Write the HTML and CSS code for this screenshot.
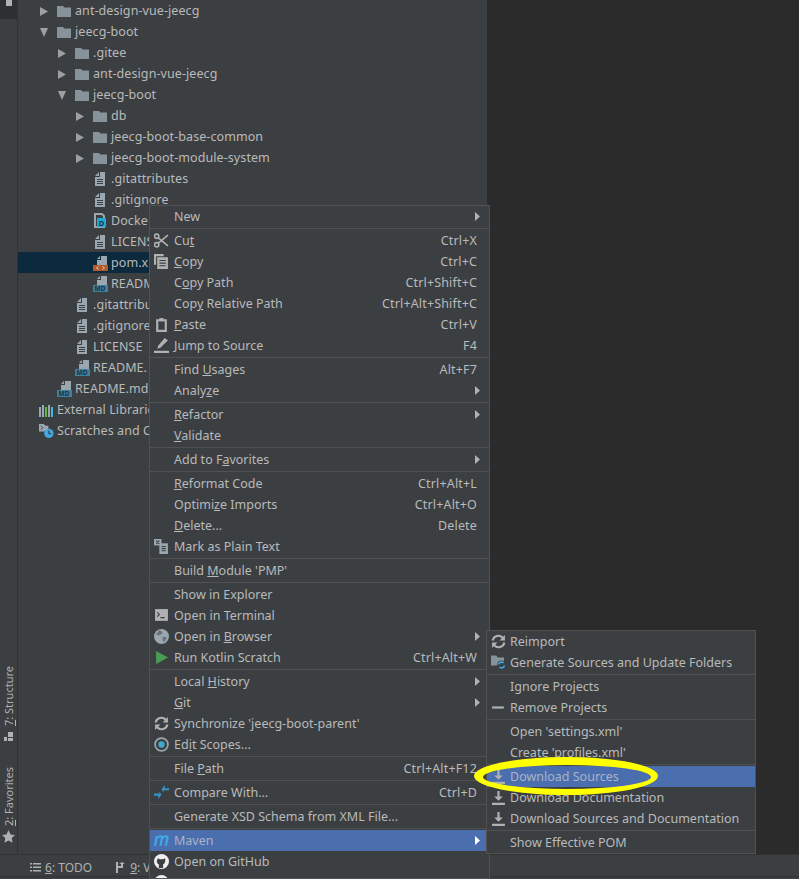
FILE: index.html
```html
<!DOCTYPE html>
<html lang="en">
<head>
<meta charset="utf-8">
<title>IDE</title>
<link rel="stylesheet" href="styles.css">
</head>
<body>
<svg width="0" height="0" class="defs">
<defs>
<symbol id="folder" viewBox="0 0 15 17"><path fill="#87939a" d="M0 4h6l1.500 1.500H14V15H0z"/></symbol>
<symbol id="file" viewBox="0 0 15 17"><path fill="#9aa7b0" d="M7 2h5v14H2V7h5z"/><path fill="#9aa7b0" d="M6 2v4H2z"/><path stroke="#3c3f41" d="M4 9.500h6M4 11.500h6M4 13.500h6"/></symbol>
<symbol id="md" viewBox="0 0 15 17"><path fill="#9aa7b0" d="M8 1h6v9H4V5h4z"/><path fill="#9aa7b0" d="M7 1v3H4z"/><rect y="10" width="15" height="7" fill="#40819e"/><text x="1.500" y="16.200" class="ic-mark">MD</text></symbol>
</defs>
</svg>
<div class="ide">
<div class="main">
<aside class="stripe">
<div class="stripe-top"><span class="stripe-knob"></span></div>
<div class="stripe-items">
<div class="stripe-item stripe-item-a"><span class="vlabel"><u>7</u>: Structure</span><svg width="10" height="10" viewBox="0 0 10 10"><path fill="#afb1b3" d="M4 0h5v5H4zM0 5h3v4H0zM4 6h5v3H4z"/></svg></div>
<div class="stripe-item"><span class="vlabel"><u>2</u>: Favorites</span><svg width="13" height="13" viewBox="0 0 13 13"><path fill="#afb1b3" d="M6.500 0l2 4.500 4.500.5-3.300 3 .9 4.800-4.100-2.400-4.100 2.400.9-4.800L0 5l4.500-.5z"/></svg></div>
</div>
</aside>
<section class="tree">
<div class="row l1"><i class="arr r"></i><svg class="ic"><use href="#folder"/></svg><span>ant-design-vue-jeecg</span></div>
<div class="row l1"><i class="arr d"></i><svg class="ic"><use href="#folder"/></svg><span>jeecg-boot</span></div>
<div class="row l2"><i class="arr r"></i><svg class="ic"><use href="#folder"/></svg><span>.gitee</span></div>
<div class="row l2"><i class="arr r"></i><svg class="ic"><use href="#folder"/></svg><span>ant-design-vue-jeecg</span></div>
<div class="row l2"><i class="arr d"></i><svg class="ic"><use href="#folder"/></svg><span>jeecg-boot</span></div>
<div class="row l3"><i class="arr r"></i><svg class="ic"><use href="#folder"/></svg><span>db</span></div>
<div class="row l3"><i class="arr r"></i><svg class="ic"><use href="#folder"/></svg><span>jeecg-boot-base-common</span></div>
<div class="row l3"><i class="arr r"></i><svg class="ic"><use href="#folder"/></svg><span>jeecg-boot-module-system</span></div>
<div class="row l3"><i class="arr"></i><svg class="ic"><use href="#file"/></svg><span>.gitattributes</span></div>
<div class="row l3"><i class="arr"></i><svg class="ic"><use href="#file"/></svg><span>.gitignore</span></div>
<div class="row l3"><i class="arr"></i><svg class="ic" viewBox="0 0 15 17"><path fill="none" stroke="#9aa7b0" stroke-width="2" d="M2 2h7l2 2v11H2z"/><rect x="4" y="6" width="9" height="9" fill="#1fa8dc"/><text x="5.800" y="13.500" class="d-mark">D</text></svg><span>Docke</span></div>
<div class="row l3"><i class="arr"></i><svg class="ic"><use href="#file"/></svg><span>LICENS</span></div>
<div class="row l3 sel"><i class="arr"></i><svg class="ic" viewBox="0 0 15 17"><path fill="#9aa7b0" d="M8 2h6v9H4V6h4z"/><path fill="#9aa7b0" d="M7 2v3H4z"/><rect y="11" width="15" height="6" fill="#b35a2b"/><path fill="none" stroke="#e0c8b8" d="M5.500 12.500L3.500 14l2 1.500M9.500 12.500l2 1.500-2 1.500"/></svg><span>pom.x</span></div>
<div class="row l3"><i class="arr"></i><svg class="ic"><use href="#md"/></svg><span>READM</span></div>
<div class="row l2"><i class="arr"></i><svg class="ic"><use href="#file"/></svg><span>.gitattribu</span></div>
<div class="row l2"><i class="arr"></i><svg class="ic"><use href="#file"/></svg><span>.gitignore</span></div>
<div class="row l2"><i class="arr"></i><svg class="ic"><use href="#file"/></svg><span>LICENSE</span></div>
<div class="row l2"><i class="arr"></i><svg class="ic"><use href="#md"/></svg><span>README.</span></div>
<div class="row l1"><i class="arr"></i><svg class="ic"><use href="#md"/></svg><span>README.md</span></div>
<div class="row l0"><i class="arr"></i><svg class="ic" viewBox="0 0 15 17"><path fill="#9aa7b0" d="M0 6h2v10H0zM3 4h2v12H3z"/><path fill="#62b543" d="M6 6h2v10H6z"/><path fill="#9aa7b0" d="M9 4h2v12H9z"/><path fill="#40b6e0" d="M12 6h2v10h-2z"/></svg><span>External Librarie</span></div>
<div class="row l0"><i class="arr"></i><svg class="ic" viewBox="0 0 16 18"><path fill="#9aa7b0" d="M0 2h5l2 2h3v6H0z"/><path fill="none" stroke="#3c3f41" d="M2 4l2 2-2 2"/><circle cx="10.500" cy="12" r="5" fill="#40a9e0"/><path fill="none" stroke="#2b2b2b" d="M10.500 9v3.500H13"/></svg><span>Scratches and C</span></div>
</section>
<div class="editor"></div>
</div>
<footer class="status">
<span class="tool"><svg width="11" height="9" viewBox="0 0 11 9"><path fill="#afb1b3" d="M0 0h2v1.500H0zM3 0h8v1.500H3zM0 3.500h2V5H0zM3 3.500h8V5H3zM0 7h2v1.500H0zM3 7h8v1.500H3z"/></svg><span><u>6</u>: TODO</span></span>
<span class="tool"><svg width="10" height="11" viewBox="0 0 10 11"><path fill="#afb1b3" d="M0 0h2v11H0zM2 4h3V2H3l3-2 3 2H7v4H2z"/></svg><span><u>9</u>: V</span></span>
</footer>
</div>

<nav class="menu main-menu">
<div class="mi"><span class="lb">New</span><i class="sub"></i></div>
<hr>
<div class="mi"><svg class="mic" viewBox="0 0 14 14"><g fill="none" stroke="#afb1b3" stroke-width="1.500"><circle cx="2.500" cy="3" r="2"/><circle cx="2.500" cy="11" r="2"/><path d="M4 4.500L13 12M4 9.500L13 2"/></g></svg><span class="lb">Cu<u>t</u></span><kbd>Ctrl+X</kbd></div>
<div class="mi"><svg class="mic" viewBox="0 0 14 14"><path fill="#afb1b3" d="M0 0h9v2H2v8H0z"/><path fill="#afb1b3" d="M3 3h10v11H3z"/><path stroke="#3c3f41" d="M5 6h6M5 8.500h6M5 11h6"/></svg><span class="lb"><u>C</u>opy</span><kbd>Ctrl+C</kbd></div>
<div class="mi"><span class="lb">C<u>o</u>py Path</span><kbd>Ctrl+Shift+C</kbd></div>
<div class="mi"><span class="lb">Cop<u>y</u> Relative Path</span><kbd>Ctrl+Alt+Shift+C</kbd></div>
<div class="mi"><svg class="mic" viewBox="0 0 14 14"><path fill="none" stroke="#afb1b3" stroke-width="2" d="M3 3h8v10H3z"/><rect x="5" y="1" width="4" height="3" fill="#afb1b3"/></svg><span class="lb"><u>P</u>aste</span><kbd>Ctrl+V</kbd></div>
<div class="mi"><svg class="mic" viewBox="0 0 14 14"><path fill="#afb1b3" d="M10 0l3 2-7 7-3 1 1-3zM0 12h14v2H0z"/></svg><span class="lb">Jump to Source</span><kbd>F4</kbd></div>
<hr>
<div class="mi"><span class="lb">Find <u>U</u>sages</span><kbd>Alt+F7</kbd></div>
<div class="mi"><span class="lb">Analy<u>z</u>e</span><i class="sub"></i></div>
<hr>
<div class="mi"><span class="lb"><u>R</u>efactor</span><i class="sub"></i></div>
<div class="mi"><span class="lb"><u>V</u>alidate</span></div>
<hr>
<div class="mi"><span class="lb">Add to F<u>a</u>vorites</span><i class="sub"></i></div>
<hr>
<div class="mi"><span class="lb"><u>R</u>eformat Code</span><kbd>Ctrl+Alt+L</kbd></div>
<div class="mi"><span class="lb">Optimi<u>z</u>e Imports</span><kbd>Ctrl+Alt+O</kbd></div>
<div class="mi"><span class="lb"><u>D</u>elete...</span><kbd>Delete</kbd></div>
<div class="mi"><svg class="mic" viewBox="0 0 14 14"><path fill="#9aa7b0" d="M0 0h7v6H0z"/><path fill="#9aa7b0" d="M5 4h8v10H5z"/><path stroke="#3c3f41" d="M2 1.500l3 3M5 1.500l-3 3M7 7h4M7 9h4M7 11h4"/></svg><span class="lb">Mark as Plain Text</span></div>
<hr>
<div class="mi"><span class="lb">Build <u>M</u>odule 'PMP'</span></div>
<hr>
<div class="mi"><span class="lb">Show in Explorer</span></div>
<div class="mi"><svg class="mic" viewBox="0 0 14 14"><rect x="1" y="1" width="12" height="11" fill="#afb1b3"/><path fill="none" stroke="#3c3f41" d="M3 4l2 2-2 2M6 9h4"/></svg><span class="lb">Open in Terminal</span></div>
<div class="mi"><svg class="mic" viewBox="0 0 14 14"><circle cx="7" cy="7" r="7" fill="#9aa7b0"/><path fill="#6b7378" d="M5 1l3 2-1 2-3 1-2-1zM8 7l4 1-2 4-2-1z"/></svg><span class="lb">Open in <u>B</u>rowser</span><i class="sub"></i></div>
<div class="mi"><svg class="mic" viewBox="0 0 14 14"><path fill="#499c54" d="M2 1l11 6-11 6z"/></svg><span class="lb">Run Kotlin Scratch</span><kbd>Ctrl+Alt+W</kbd></div>
<hr>
<div class="mi"><span class="lb">Local <u>H</u>istory</span><i class="sub"></i></div>
<div class="mi"><span class="lb"><u>G</u>it</span><i class="sub"></i></div>
<div class="mi"><svg class="mic" viewBox="0 0 14 14"><g fill="none" stroke="#afb1b3" stroke-width="2"><path d="M1.500 6A5.500 5.500 0 0 1 11 3.500M12.500 8A5.500 5.500 0 0 1 3 10.500"/></g><path fill="#afb1b3" d="M13 1v5H8zM1 13V8h5z"/></svg><span class="lb">Synchronize 'jeecg-boot-parent'</span></div>
<div class="mi"><svg class="mic" viewBox="0 0 14 14"><circle cx="7" cy="7" r="6" fill="none" stroke="#9aa7b0" stroke-width="1.600"/><circle cx="7" cy="7" r="3" fill="#40a9d0"/></svg><span class="lb">Ed<u>i</u>t Scopes...</span></div>
<hr>
<div class="mi"><span class="lb">File <u>P</u>ath</span><kbd>Ctrl+Alt+F12</kbd></div>
<hr>
<div class="mi"><svg class="mic" viewBox="0 0 14 14"><path fill="#3592c4" d="M0 8h5V6l2 3-3 4v-3H0zM14 5H9v2L7 4l3-4v3h4z"/></svg><span class="lb">Compare With...</span><kbd>Ctrl+D</kbd></div>
<hr>
<div class="mi"><span class="lb">Generate XSD Schema from XML File...</span></div>
<hr>
<div class="mi on"><svg class="mic" viewBox="0 0 14 14"><path fill="none" stroke="#3fa9e8" stroke-width="2" d="M1 12l1.500-9M2.500 5Q4 3 6 3t1.500 2L6 12M7.500 5Q9 3 11 3t1.500 2L11 12"/></svg><span class="lb">Maven</span><i class="sub"></i></div>
<div class="mi"><svg class="mic" viewBox="0 0 14 14"><circle cx="7" cy="7" r="7" fill="#f0f0f0"/><path fill="#3c3f41" d="M3.500 4l2 1h3l2-1v3l-1 2-1 .5V13h-4V9.500l-1-.5-1-2z"/></svg><span class="lb">Open on GitHub</span></div>
<div class="mi"><svg class="mic" viewBox="0 0 14 14"><circle cx="7" cy="7" r="7" fill="#f0f0f0"/></svg></div>
</nav>

<nav class="menu sub-menu">
<div class="mi"><svg class="mic" viewBox="0 0 14 14"><g fill="none" stroke="#afb1b3" stroke-width="2"><path d="M1.500 6A5.500 5.500 0 0 1 11 3.500M12.500 8A5.500 5.500 0 0 1 3 10.500"/></g><path fill="#afb1b3" d="M13 1v5H8zM1 13V8h5z"/></svg><span class="lb">Reimport</span></div>
<div class="mi"><svg class="mic" viewBox="0 0 15 14"><path fill="#87939a" d="M0 0h5l2 2h6v8H0z"/><circle cx="10.500" cy="9.500" r="4.500" fill="#3c3f41"/><path fill="none" stroke="#3fa9e8" stroke-width="1.600" d="M7.500 9a3 3 0 0 1 5-1.500M13.500 10a3 3 0 0 1-5 1.500"/></svg><span class="lb">Generate Sources and Update Folders</span></div>
<hr>
<div class="mi"><span class="lb">Ignore Projects</span></div>
<div class="mi"><svg class="mic" viewBox="0 0 14 14"><rect x="1" y="6" width="11" height="2" fill="#afb1b3"/></svg><span class="lb">Remove Projects</span></div>
<hr>
<div class="mi"><span class="lb">Open 'settings.xml'</span></div>
<div class="mi"><span class="lb">Create 'profiles.xml'</span></div>
<hr>
<div class="mi on"><svg class="mic" viewBox="0 0 14 14"><path fill="#afb1b3" d="M6 1h2v5h3L7 10 3 6h3zM1 12h12v2H1z"/></svg><span class="lb">Download Sources</span></div>
<div class="mi"><svg class="mic" viewBox="0 0 14 14"><path fill="#afb1b3" d="M6 1h2v5h3L7 10 3 6h3zM1 12h12v2H1z"/></svg><span class="lb">Download Documentation</span></div>
<div class="mi"><svg class="mic" viewBox="0 0 14 14"><path fill="#afb1b3" d="M6 1h2v5h3L7 10 3 6h3zM1 12h12v2H1z"/></svg><span class="lb">Download Sources and Documentation</span></div>
<hr>
<div class="mi"><span class="lb">Show Effective POM</span></div>
</nav>

<svg class="ring" width="190" height="42" viewBox="0 0 190 42"><path fill="#ffff00" fill-rule="evenodd" d="M2 20a92 19 0 1 0 184 0a92 19 0 1 0-184 0zM11 21a84 12 0 1 0 168 0a84 12 0 1 0-168 0z"/></svg>
</body>
</html>
```
FILE: styles.css
```css
* { box-sizing: border-box; }
html, body { margin: 0; height: 879px; overflow: hidden; background: #3c3f41; }
body { font-family: "Noto Sans", "Open Sans", sans-serif; font-size: 12.5px; color: #b8babc; position: relative; }
.defs { position: absolute; }
.ide { height: 879px; display: flex; flex-direction: column; padding-bottom: 2px; }
.main { flex: 1; display: flex; min-height: 0; }
.status { height: 23px; border-top: 1px solid #323232; border-bottom: 1px solid #323232; padding: 3px 0 0 30px; display: flex; align-items: center; gap: 24px; font-size: 12px; color: #afb1b3; }
.tool { display: flex; align-items: center; gap: 4px; white-space: nowrap; }
.stripe { width: 18px; border-right: 1px solid #323232; display: flex; flex-direction: column; justify-content: space-between; }
.stripe-top { height: 19px; background: #2d2f30; display: flex; justify-content: center; }
.stripe-knob { width: 6px; height: 6px; background: #afb1b3; }
.stripe-items { display: flex; flex-direction: column; gap: 25px; align-items: center; margin-bottom: 11px; }
.stripe-item { display: flex; flex-direction: column; align-items: center; gap: 4px; }
.stripe-item-a { gap: 6px; }
.vlabel { writing-mode: vertical-rl; transform: rotate(180deg); font-size: 11px; line-height: 16px; color: #afb1b3; white-space: nowrap; }
.tree { width: 469px; overflow: hidden; letter-spacing: .08px; }
.editor { flex: 1; background: #2b2b2b; }
.row { height: 21px; display: flex; align-items: center; white-space: nowrap; }
.l0 { padding-left: 4px; }
.l1 { padding-left: 22px; }
.l2 { padding-left: 40px; }
.l3 { padding-left: 58px; }
.sel { background: #0d293e; }
.arr { width: 8px; height: 9px; margin: 2px 9px 0 0; flex: none; }
.arr.r { background: #9da0a2; clip-path: polygon(0 0, 100% 50%, 0 100%); }
.arr.d { background: #9da0a2; clip-path: polygon(0 0, 100% 0, 50% 100%); }
.ic { width: 15px; height: 17px; flex: none; margin-right: 3px; overflow: visible; }
.d-mark { font-size: 7.500px; font-weight: 700; fill: #20323c; font-family: "Noto Sans", sans-serif; }
.ic-mark { font-size: 6.500px; font-weight: 700; fill: #23323a; font-family: "Noto Sans", sans-serif; letter-spacing: 0; }
.menu { position: absolute; background: #3c3f41; border: 1px solid #515151; overflow: hidden; }
.main-menu { left: 149px; top: 205px; width: 341px; height: 674px; }
.sub-menu { left: 486px; top: 630px; width: 270px; }
.sub-menu .mi { padding-left: 23px; }
.mi { height: 21px; display: flex; align-items: center; padding: 0 12px 0 24px; position: relative; white-space: nowrap; }
.mic { position: absolute; left: 4px; top: 3px; width: 15px; height: 15px; }
.lb { flex: 1; }
kbd { font: inherit; letter-spacing: .16px; }
.on { background: #4b6eaf; color: #a9b4c6; }
.sub { width: 5px; height: 9px; margin-right: -3px; background: #afb1b3; clip-path: polygon(0 0, 100% 50%, 0 100%); }
.on .sub { background: #ffffff; }
hr { height: 3px; margin: 0; border: 0; background: linear-gradient(#3c3f41 1px, #515151 1px, #515151 2px, #3c3f41 2px); }
.ring { position: absolute; left: 472px; top: 756px; }
```
